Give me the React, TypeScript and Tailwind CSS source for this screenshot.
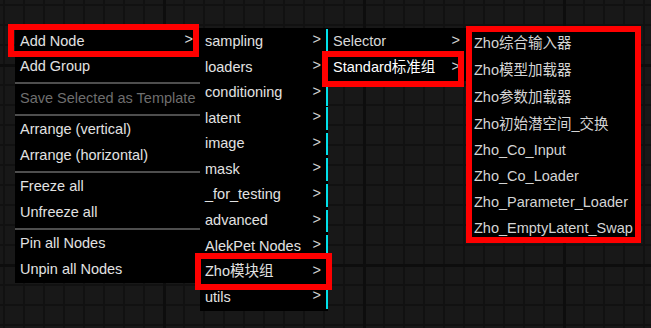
const font = "font-['Liberation_Sans','Noto_Sans_CJK_SC',sans-serif]";

type Row = { label: string; sub?: boolean; dim?: boolean; sep?: boolean };

const mainMenu: Row[] = [
  { label: "Add Node", sub: true },
  { label: "Add Group" },
  { label: "", sep: true },
  { label: "Save Selected as Template", dim: true },
  { label: "", sep: true },
  { label: "Arrange (vertical)" },
  { label: "Arrange (horizontal)" },
  { label: "", sep: true },
  { label: "Freeze all" },
  { label: "Unfreeze all" },
  { label: "", sep: true },
  { label: "Pin all Nodes" },
  { label: "Unpin all Nodes" },
];

const categories = [
  "sampling",
  "loaders",
  "conditioning",
  "latent",
  "image",
  "mask",
  "_for_testing",
  "advanced",
  "AlekPet Nodes",
  "Zho模块组",
  "utils",
];

const zhoNodes = [
  { label: "Zho综合输入器", cjk: true },
  { label: "Zho模型加载器", cjk: true },
  { label: "Zho参数加载器", cjk: true },
  { label: "Zho初始潜空间_交换", cjk: true },
  { label: "Zho_Co_Input" },
  { label: "Zho_Co_Loader" },
  { label: "Zho_Parameter_Loader" },
  { label: "Zho_EmptyLatent_Swap" },
];

export default function App() {
  return (
    <div
      className={`relative w-[651px] h-[328px] overflow-hidden bg-[#181818] ${font} text-[14.5px]
        [background-image:linear-gradient(to_right,#0d0d0d_3px,transparent_3px),linear-gradient(to_bottom,#0d0d0d_3px,transparent_3px),linear-gradient(to_right,#111111_2px,transparent_2px),linear-gradient(to_bottom,#111111_2px,transparent_2px)]
        [background-size:200px_200px,200px_200px,20px_20px,20px_20px]
        [background-position:163px_64px,163px_64px,3px_4px,3px_4px]`}
    >
      <div className="flex items-start pl-[15px] pt-[28px]">
        {/* MAIN CANVAS MENU */}
        <div className="w-[185px] bg-black pt-px">
          {mainMenu.map((r, i) =>
            r.sep ? (
              <div key={i} className="py-[2px]">
                <div className="h-[2px] bg-[#4e4e4e]" />
              </div>
            ) : (
              <div
                key={i}
                className={`flex h-[25.5px] items-center justify-between pl-[5px] pr-[7px] whitespace-nowrap ${
                  r.dim ? "text-[#6e6e6e]" : "text-[#e2e2e2]"
                }`}
              >
                <span>{r.label}</span>
                {r.sub && <span className="-mt-[3px] text-[#d8d8d8]">&gt;</span>}
              </div>
            )
          )}
        </div>

        {/* NODE CATEGORIES */}
        <div className="w-[128px] bg-black pt-px">
          {categories.map((c, i) => (
            <div key={c} className={`h-[25.6px] ${i < 3 ? "py-0" : "py-[1.5px]"}`}>
              <div className="flex h-full items-center justify-between border-r-2 border-[#00e1ea] pl-[5px] pr-[5px] text-[#e2e2e2] whitespace-nowrap">
                <span>{c}</span>
                <span className="-mt-[3px] text-[#d0d0d0]">&gt;</span>
              </div>
            </div>
          ))}
        </div>

        {/* ZHO GROUPS */}
        <div className="w-[140px] bg-black pt-px">
          {["Selector", "Standard标准组"].map((s, i) => (
            <div
              key={s}
              className={`flex h-[26px] items-center justify-between pl-[5px] pr-[8px] whitespace-nowrap ${
                i === 1 ? "text-white" : "text-[#d8d8d8]"
              }`}
            >
              <span>{s}</span>
              <span className="-mt-[3px] text-[#d0d0d0]">&gt;</span>
            </div>
          ))}
        </div>

        {/* STANDARD NODES */}
        <div className="w-[170px] bg-black pt-[2px]">
          {zhoNodes.map((n) => (
            <div
              key={n.label}
              className={`flex items-center pl-[6px] text-[#d4d4d4] whitespace-nowrap ${
                n.cjk ? "h-[27px]" : "h-[26px]"
              }`}
            >
              {n.label}
            </div>
          ))}
        </div>
      </div>

      {/* RED HIGHLIGHTS */}
      <div className="pointer-events-none absolute left-[8px] top-[24px] h-[33px] w-[191px] border-[6px] border-[#ff0000]" />
      <div className="pointer-events-none absolute left-[195px] top-[253px] h-[37px] w-[137px] border-[6px] border-[#ff0000]" />
      <div className="pointer-events-none absolute left-[322px] top-[51px] h-[36px] w-[142px] border-[6px] border-[#ff0000]" />
      <div className="pointer-events-none absolute left-[466px] top-[26px] h-[217px] w-[175px] border-[6px] border-[#ff0000]" />
    </div>
  );
}
